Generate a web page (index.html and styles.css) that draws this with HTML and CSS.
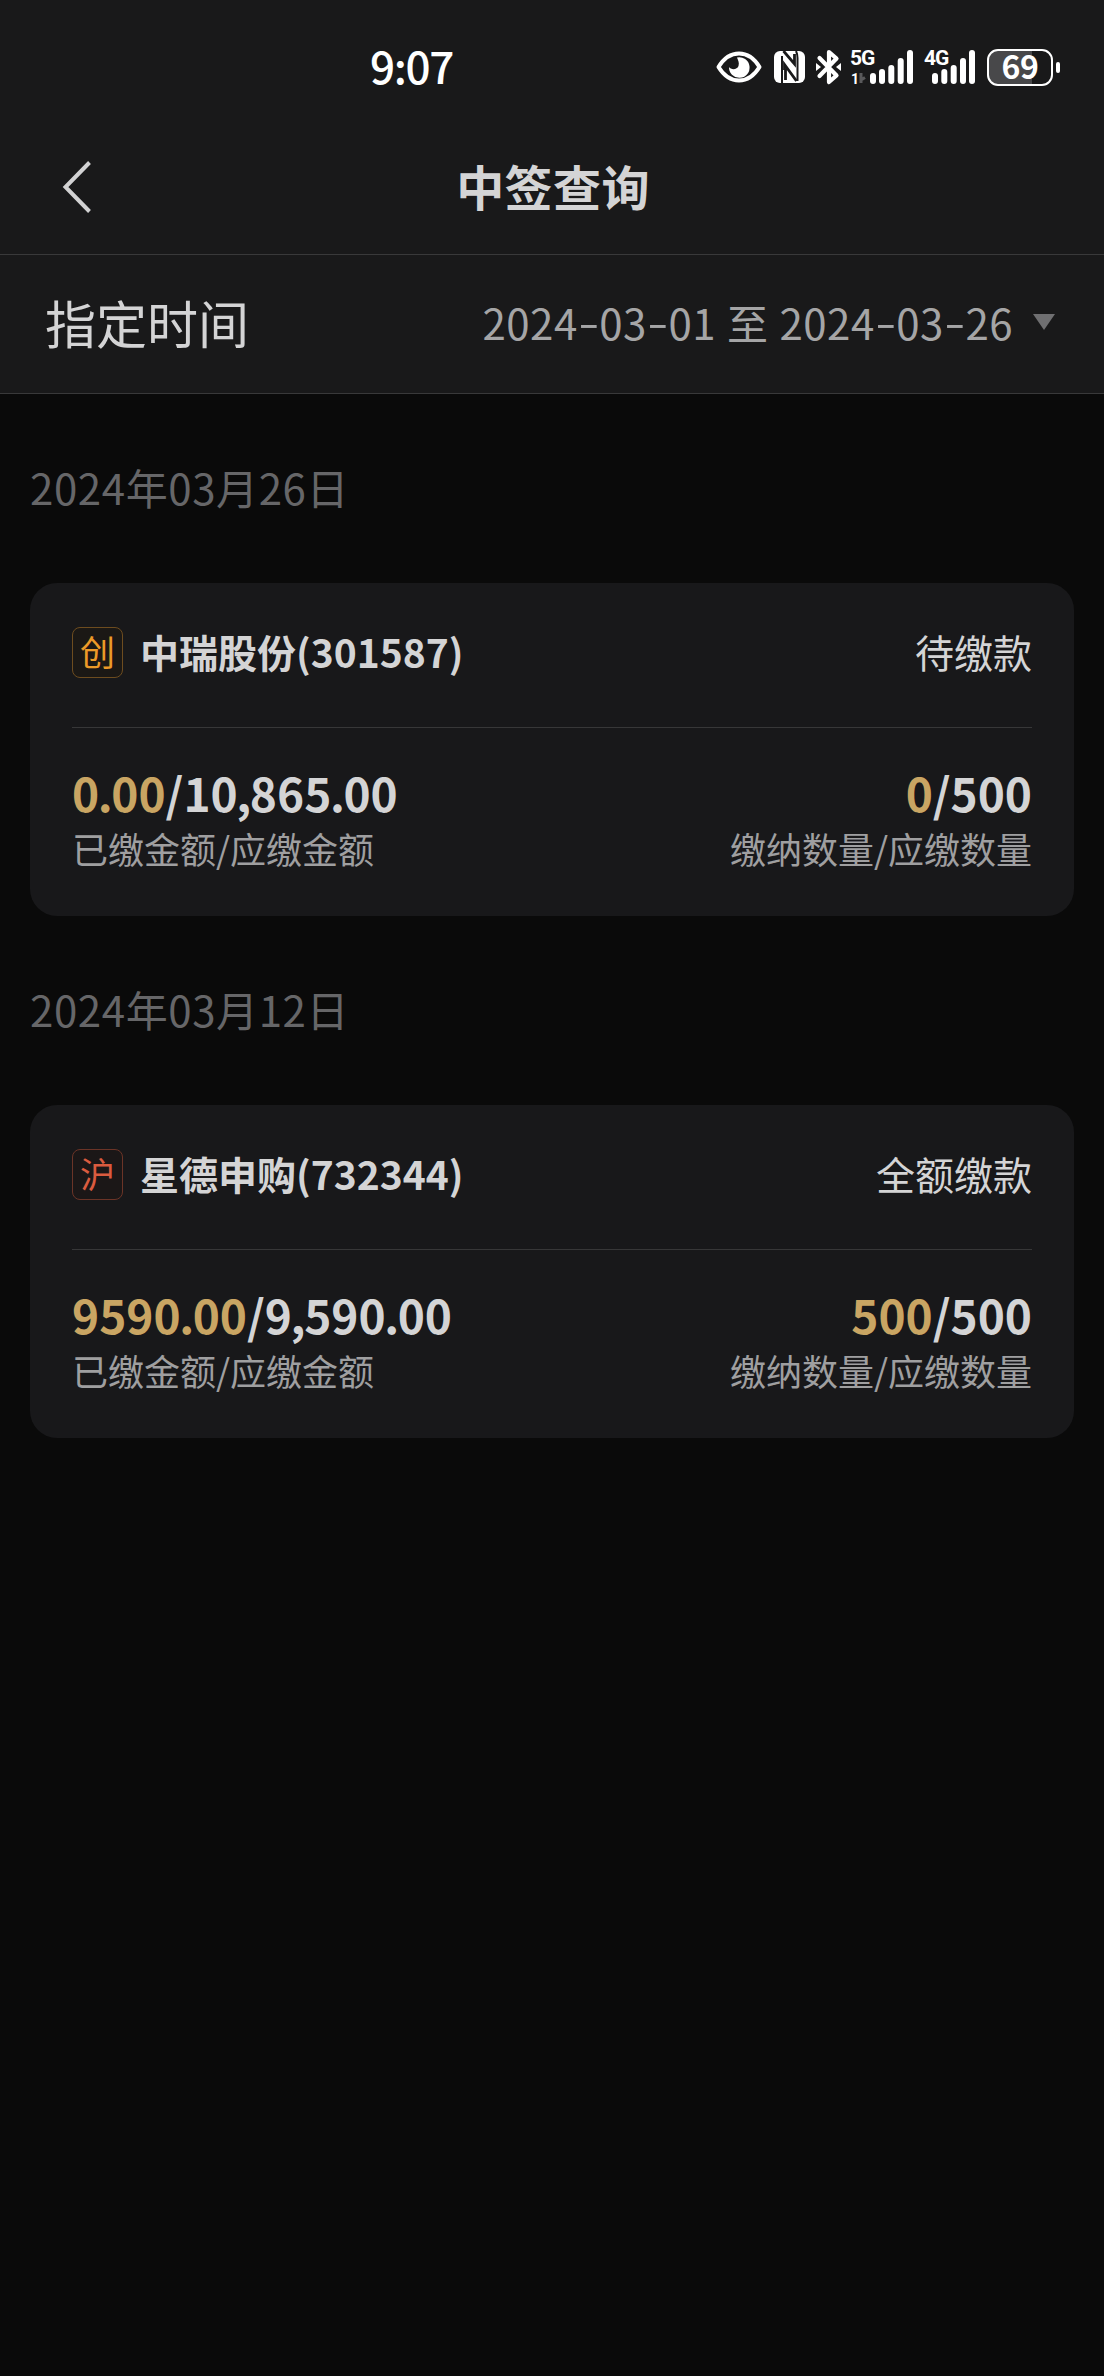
FILE: index.html
```html
<!DOCTYPE html>
<html lang="zh-CN">
<head>
<meta charset="utf-8">
<title>中签查询</title>
<link rel="stylesheet" href="styles.css">
</head>
<body>
<header class="top">
  <div class="status-bar">
    <div class="clock">9:07</div>
    <div class="status-icons">
      <svg class="eye" width="46" height="32" viewBox="0 0 46 32"><path d="M2.500 16C8 7 15 2.500 23 2.500S38 7 43.500 16C38 25 31 29.500 23 29.500S8 25 2.500 16Z" fill="none" stroke="#fff" stroke-width="4" stroke-linejoin="round"/><path d="M21 6.500a10.300 10.300 0 1 1-8 9.500c2 3 8 3 9.500-1 1-3.500-.5-6-1.500-8.500Z" fill="#fff"/></svg>
      <svg class="nfc" width="31" height="32" viewBox="0 0 31 32"><rect width="31" height="32" rx="6" fill="#fff"/><path d="M9.500 0 20.500 13V3M10.500 19V13.500L22.500 30M11.500 18V29" fill="none" stroke="#19191a" stroke-width="2.800"/><path d="M8 5V32M22 0Q23.500 3 23.500 7V30" fill="none" stroke="#19191a" stroke-width="2"/></svg>
      <svg class="bluetooth" width="25" height="36" viewBox="0 0 25 36"><path d="M3.500 9 20.500 26.500 13 33V3L20.500 9.500 3.500 27" fill="none" stroke="#fff" stroke-width="4.200" stroke-linejoin="round" stroke-linecap="round"/><path d="M0 14 5 18 0 22ZM25 14 20 18 25 22Z" fill="#fff"/></svg>
      <div class="signal signal-5g">
        <span class="net">5G</span><span class="sim">1</span>
        <svg width="62" height="34" viewBox="0 0 62 34"><path d="M10 23v7m0 0 4-2.500M10 30v3" stroke="#59595b" stroke-width="3" fill="none"/><g fill="#fff"><rect x="19" y="23" width="6" height="11" rx="3"/><rect x="28" y="19" width="6" height="15" rx="3"/><rect x="37.300" y="15" width="6" height="19" rx="3"/><rect x="46.700" y="8" width="6" height="26" rx="3"/><rect x="56" y="0" width="6" height="34" rx="3"/></g></svg>
      </div>
      <div class="signal signal-4g">
        <span class="net">4G</span>
        <svg width="50" height="34" viewBox="0 0 50 34"><g fill="#fff"><rect x="7" y="23" width="6" height="11" rx="3"/><rect x="16.300" y="19" width="6" height="15" rx="3"/><rect x="25.700" y="15" width="6" height="19" rx="3"/><rect x="35" y="8" width="6" height="26" rx="3"/><rect x="44" y="0" width="6" height="34" rx="3"/></g></svg>
      </div>
      <div class="battery"><span class="level">69</span></div>
      <div class="battery-tip"></div>
    </div>
  </div>
  <nav class="nav">
    <svg class="back" width="30" height="54" viewBox="0 0 30 54"><path d="M27.500 2.500 3.500 27 27.500 51.500" fill="none" stroke="#d2d2d3" stroke-width="4"/></svg>
    <h1 class="title">中签查询</h1>
  </nav>
</header>
<section class="filter">
  <div class="filter-label">指定时间</div>
  <div class="range">
    <span>2024<i class="dash">-</i>03<i class="dash">-</i>01<b class="to">至</b>2024<i class="dash">-</i>03<i class="dash">-</i>26</span>
    <svg width="22" height="16" viewBox="0 0 22 16"><path d="M0 0H22L11 16Z" fill="#6f6f71"/></svg>
  </div>
</section>
<main>
  <h2 class="day">2024年03月26日</h2>
  <article class="card">
    <div class="card-head">
      <span class="badge badge-chuang">创</span>
      <span class="name">中瑞股份(301587)</span>
      <span class="state">待缴款</span>
    </div>
    <div class="card-body">
      <div class="cell">
        <div class="value"><span class="paid">0<i class="point">.</i>00</span>/10<i class="point">,</i>865<i class="point">.</i>00</div>
        <div class="caption">已缴金额/应缴金额</div>
      </div>
      <div class="cell cell-right">
        <div class="value"><span class="paid">0</span>/500</div>
        <div class="caption">缴纳数量/应缴数量</div>
      </div>
    </div>
  </article>
  <h2 class="day">2024年03月12日</h2>
  <article class="card">
    <div class="card-head">
      <span class="badge badge-hu">沪</span>
      <span class="name">星德申购(732344)</span>
      <span class="state">全额缴款</span>
    </div>
    <div class="card-body">
      <div class="cell">
        <div class="value"><span class="paid">9590<i class="point">.</i>00</span>/9<i class="point">,</i>590<i class="point">.</i>00</div>
        <div class="caption">已缴金额/应缴金额</div>
      </div>
      <div class="cell cell-right">
        <div class="value"><span class="paid">500</span>/500</div>
        <div class="caption">缴纳数量/应缴数量</div>
      </div>
    </div>
  </article>
</main>
</body>
</html>
```
FILE: styles.css
```css
* { box-sizing: border-box; margin: 0; }
body {
  min-height: 2376px;
  background: #0a0a0a;
  color: #d4d4d5;
  font-family: "Noto Sans CJK SC", "Noto Sans", sans-serif;
}
svg { display: block; flex: none; }
.top { height: 255px; background: #19191a; border-bottom: 1px solid #39393a; }
.status-bar { height: 120px; display: flex; justify-content: space-between; padding: 0 44px 0 370px; color: #fff; }
.clock { font-size: 44px; line-height: 64px; padding-top: 33px; font-weight: 500; letter-spacing: -1.300px; }
.status-icons { display: flex; align-items: center; height: 36px; margin-top: 49px; }
.nfc { margin-left: 12px; }
.bluetooth { margin-left: 11px; }
.signal { position: relative; height: 34px; }
.signal-5g { margin-left: 10px; }
.signal-4g { margin-left: 12px; }
.net { position: absolute; left: -1px; top: -4px; font-family: Roboto, sans-serif; font-size: 21px; line-height: 25px; font-weight: 700; letter-spacing: -1px; }
.sim { position: absolute; left: 0; top: 21px; font-family: Roboto, sans-serif; font-size: 14px; line-height: 16px; font-weight: 700; }
.battery {
  width: 66px; height: 37px; margin-left: 12px;
  border: 2.500px solid #fff; border-radius: 11px;
  background: linear-gradient(90deg, #48484a 43px, transparent 43px);
  display: flex; justify-content: center;
}
.level { font-size: 32px; line-height: 29px; font-weight: 700; letter-spacing: -0.5px; }
.battery-tip { width: 4px; height: 11px; margin-left: 3px; border-radius: 2px; background: #fff; }
.nav { height: 134px; display: grid; grid-template-columns: 200px 1fr 200px; align-items: center; }
.back { margin-left: 62px; }
.title { font-size: 48px; line-height: 60px; font-weight: 700; text-align: center; padding: 0 0 5px 2px; letter-spacing: .4px; }
.filter {
  height: 139px; padding: 0 49px 5px 45px; display: flex; align-items: center; justify-content: space-between;
  background: #19191a; border-bottom: 1px solid #39393a;
}
.filter-label { font-size: 51px; line-height: 64px; }
.range { display: flex; align-items: center; gap: 20px; font-size: 42px; line-height: 60px; letter-spacing: .5px; color: #a5a5a6; }
.dash { display: inline-block; width: 21.500px; text-align: center; font-style: normal; letter-spacing: 0; transform: translateY(-2.500px) scaleX(1.450); }
.to { font-weight: 400; font-size: 41px; margin: 0 11px; }
.day { height: 189px; padding: 0 30px 4px; display: flex; align-items: center; font-size: 42px; font-weight: 400; letter-spacing: .6px; color: #666668; }
.card { height: 333px; margin: 0 30px; padding: 0 42px; border-radius: 27px; background: #18181a; }
.card-head { height: 145px; padding-bottom: 5px; display: flex; align-items: center; border-bottom: 1px solid #373738; font-size: 39px; line-height: 50px; }
.badge { width: 51px; height: 51px; border: 1px solid; border-radius: 8px; display: flex; justify-content: center; font-size: 35px; line-height: 45px; font-weight: 400; }
.badge-chuang { color: #ec9a28; border-color: #6d4c1f; background: #1b1815; }
.badge-hu { color: #da5b3f; border-color: #6b3427; background: #1b1717; }
.name { margin-left: 17px; padding-bottom: 3px; font-weight: 700; }
.state { margin-left: auto; padding-bottom: 3px; }
.card-body { display: flex; justify-content: space-between; padding-top: 36px; }
.cell-right { text-align: right; }
.value { font-size: 46px; line-height: 56px; font-weight: 700; }
.point { font-style: normal; margin: 0 -1.400px; }
.paid { color: #c9a563; }
.caption { margin-top: 5px; font-size: 36px; line-height: 46px; color: #9f9fa0; }
```
